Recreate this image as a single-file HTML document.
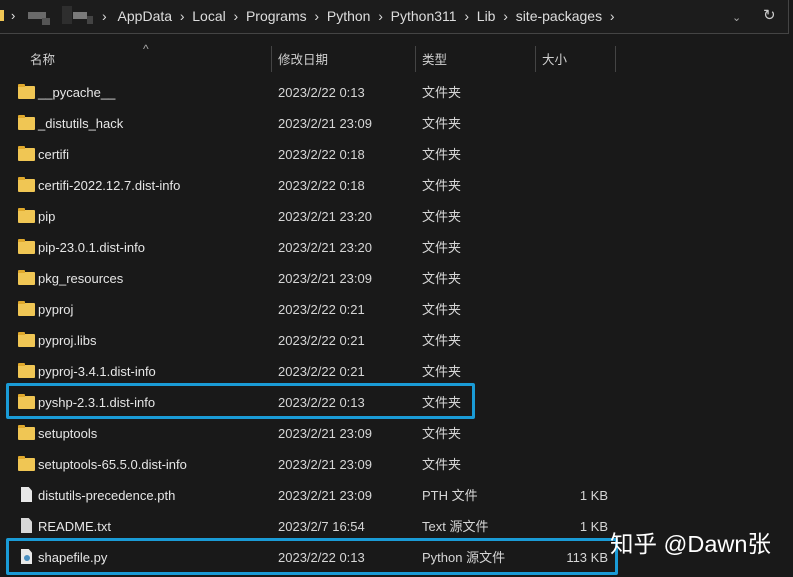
<!DOCTYPE html>
<html><head><meta charset="utf-8"><style>
body{margin:0;width:793px;height:577px;background:#191919;overflow:hidden;position:relative;font-family:"Liberation Sans","Noto Sans CJK SC",sans-serif;color:#e6e6e6;font-size:13px}
.a{position:absolute;white-space:nowrap;line-height:16px}
.addr{position:absolute;left:0;top:0;width:788px;height:33px;background:#1c1c1c;border-bottom:1px solid #444;border-right:1px solid #444}
.hd{color:#d0d0d0;font-size:12.5px}
.sep{position:absolute;top:46px;width:1px;height:26px;background:#444}
.row{position:absolute;left:0;height:31px;width:793px}
.row span{position:absolute;top:8px;white-space:nowrap;line-height:16px}
.fold{position:absolute;left:18px;top:9px;width:17px;height:13px;background:#f0c654;border-radius:1px}
.fold:before{content:"";position:absolute;left:0;top:-2px;width:7px;height:3px;background:#e0a92c;border-radius:1px 1px 0 0}
.file{position:absolute;left:21px;top:7px;width:11px;height:15px;background:#e8e8e8;clip-path:polygon(0 0,70% 0,100% 25%,100% 100%,0 100%)}
.box{position:absolute;border:3px solid #1a9bd6;border-radius:2px}
.d{left:278px;color:#d6d6d6}.t{left:422px;color:#d6d6d6}.s{right:185px;color:#d6d6d6}
</style></head><body>
<div class="addr"></div>
<div class="a" style="left:-3px;top:10px;width:7px;height:11px;background:#f0c654"></div>
<div class="a" style="left:11px;top:8px;font-size:13px">›</div>
<div class="a" style="left:28px;top:12px;width:18px;height:7px;background:#6a6a6a"></div>
<div class="a" style="left:42px;top:18px;width:8px;height:7px;background:#555"></div>
<div class="a" style="left:62px;top:6px;width:10px;height:18px;background:#2e2e2e"></div>
<div class="a" style="left:73px;top:12px;width:14px;height:7px;background:#7a7a7a"></div>
<div class="a" style="left:87px;top:16px;width:6px;height:8px;background:#444"></div>
<div class="a" style="left:102px;top:8px;font-size:14px;color:#ddd">›&nbsp;&nbsp; AppData &nbsp;›&nbsp; Local &nbsp;›&nbsp; Programs &nbsp;›&nbsp; Python &nbsp;›&nbsp; Python311 &nbsp;›&nbsp; Lib &nbsp;›&nbsp; site-packages &nbsp;›</div>
<div class="a" style="left:732px;top:10px;color:#aaa;font-size:11px">⌄</div>
<div class="a" style="left:763px;top:8px;color:#ccc;font-size:15px">↻</div>
<div class="a" style="left:143px;top:41px;color:#aaa;font-size:12px">^</div>
<div class="a hd" style="left:30px;top:52px">名称</div>
<div class="sep" style="left:271px"></div><div class="a hd" style="left:278px;top:52px">修改日期</div>
<div class="sep" style="left:415px"></div><div class="a hd" style="left:422px;top:52px">类型</div>
<div class="sep" style="left:535px"></div><div class="a hd" style="left:542px;top:52px">大小</div>
<div class="sep" style="left:615px"></div>

<div class="row" style="top:77px"><i class="fold"></i><span style="left:38px">__pycache__</span><span class="d">2023/2/22 0:13</span><span class="t">文件夹</span></div>
<div class="row" style="top:108px"><i class="fold"></i><span style="left:38px">_distutils_hack</span><span class="d">2023/2/21 23:09</span><span class="t">文件夹</span></div>
<div class="row" style="top:139px"><i class="fold"></i><span style="left:38px">certifi</span><span class="d">2023/2/22 0:18</span><span class="t">文件夹</span></div>
<div class="row" style="top:170px"><i class="fold"></i><span style="left:38px">certifi-2022.12.7.dist-info</span><span class="d">2023/2/22 0:18</span><span class="t">文件夹</span></div>
<div class="row" style="top:201px"><i class="fold"></i><span style="left:38px">pip</span><span class="d">2023/2/21 23:20</span><span class="t">文件夹</span></div>
<div class="row" style="top:232px"><i class="fold"></i><span style="left:38px">pip-23.0.1.dist-info</span><span class="d">2023/2/21 23:20</span><span class="t">文件夹</span></div>
<div class="row" style="top:263px"><i class="fold"></i><span style="left:38px">pkg_resources</span><span class="d">2023/2/21 23:09</span><span class="t">文件夹</span></div>
<div class="row" style="top:294px"><i class="fold"></i><span style="left:38px">pyproj</span><span class="d">2023/2/22 0:21</span><span class="t">文件夹</span></div>
<div class="row" style="top:325px"><i class="fold"></i><span style="left:38px">pyproj.libs</span><span class="d">2023/2/22 0:21</span><span class="t">文件夹</span></div>
<div class="row" style="top:356px"><i class="fold"></i><span style="left:38px">pyproj-3.4.1.dist-info</span><span class="d">2023/2/22 0:21</span><span class="t">文件夹</span></div>
<div class="row" style="top:387px"><i class="fold"></i><span style="left:38px">pyshp-2.3.1.dist-info</span><span class="d">2023/2/22 0:13</span><span class="t">文件夹</span></div>
<div class="row" style="top:418px"><i class="fold"></i><span style="left:38px">setuptools</span><span class="d">2023/2/21 23:09</span><span class="t">文件夹</span></div>
<div class="row" style="top:449px"><i class="fold"></i><span style="left:38px">setuptools-65.5.0.dist-info</span><span class="d">2023/2/21 23:09</span><span class="t">文件夹</span></div>
<div class="row" style="top:480px"><i class="file"></i><span style="left:38px">distutils-precedence.pth</span><span class="d">2023/2/21 23:09</span><span class="t">PTH 文件</span><span class="s">1 KB</span></div>
<div class="row" style="top:511px"><i class="file" style="background:#d8d8d8"></i><span style="left:38px">README.txt</span><span class="d">2023/2/7 16:54</span><span class="t">Text 源文件</span><span class="s">1 KB</span></div>
<div class="row" style="top:542px"><i class="file"></i><span style="left:38px">shapefile.py</span><span class="d">2023/2/22 0:13</span><span class="t">Python 源文件</span><span class="s">113 KB</span></div>
<div class="a" style="left:24px;top:555px;width:6px;height:6px;background:#4a8fc0;border-radius:50%"></div>

<div class="box" style="left:6px;top:383px;width:463px;height:30px"></div>
<div class="box" style="left:6px;top:538px;width:606px;height:31px"></div>
<div class="a" style="left:610px;top:531px;font-size:23.5px;line-height:26px;color:#fff">知乎 @Dawn张</div>
</body></html>
